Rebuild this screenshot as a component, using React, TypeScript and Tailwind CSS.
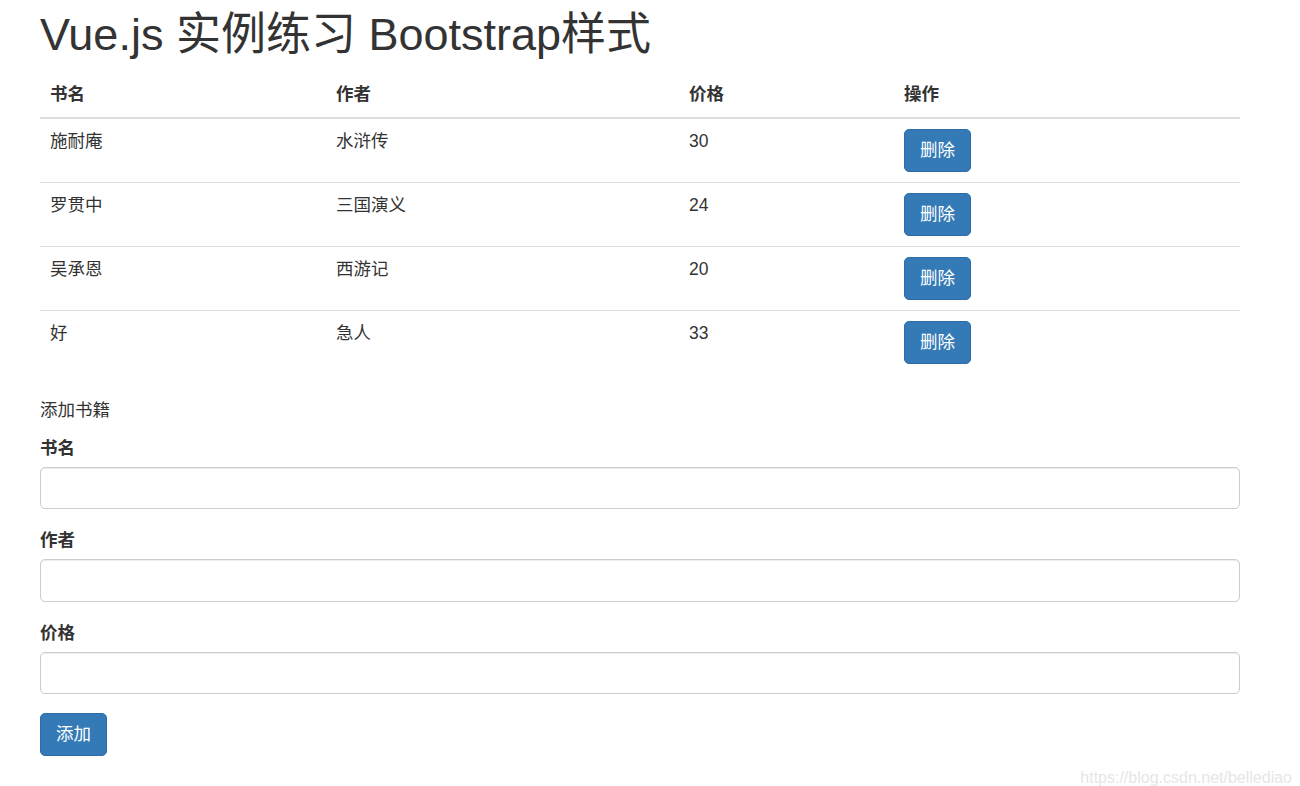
import React from "react";

const books = [
  { name: "施耐庵", author: "水浒传", price: 30 },
  { name: "罗贯中", author: "三国演义", price: 24 },
  { name: "吴承恩", author: "西游记", price: 20 },
  { name: "好", author: "急人", price: 33 },
];

const font = {
  fontFamily:
    '"Liberation Sans", Arial, "Noto Sans CJK SC", sans-serif',
};

export default function App() {
  return (
    <div
      className="relative min-h-[786px] bg-white text-[#333] text-[17.5px] leading-[25px]"
      style={font}
    >
      <div className="ml-[40px] w-[1200px]">
        <h1 className="mt-[10px] mb-[12.5px] text-[45px] leading-[49.5px] font-normal">
          Vue.js 实例练习 Bootstrap样式
        </h1>
        <table className="w-full border-collapse mb-[25px]">
          <thead>
            <tr className="border-b-[2.5px] border-[#ddd]">
              <th className="w-[286px] p-[10px] text-left font-bold">书名</th>
              <th className="w-[353px] p-[10px] text-left font-bold">作者</th>
              <th className="w-[215px] p-[10px] text-left font-bold">价格</th>
              <th className="p-[10px] text-left font-bold">操作</th>
            </tr>
          </thead>
          <tbody>
            {books.map((b, i) => (
              <tr key={i} className={i > 0 ? "border-t border-[#ddd]" : ""}>
                <td className="p-[10px] align-top">{b.name}</td>
                <td className="p-[10px] align-top">{b.author}</td>
                <td className="p-[10px] align-top">{b.price}</td>
                <td className="p-[10px] align-top">
                  <button className="h-[43px] px-[15px] rounded-[5px] bg-[#337ab7] border border-[#2e6da4] text-white">
                    删除
                  </button>
                </td>
              </tr>
            ))}
          </tbody>
        </table>
        <p className="mt-[-1px] mb-[12.5px]">添加书籍</p>
        {["书名", "作者", "价格"].map((l) => (
          <div key={l} className="mb-[18.75px]">
            <label className="block mb-[6.25px] font-bold">{l}</label>
            <input
              className="block w-full h-[42.5px] rounded-[5px] border border-[#ccc] shadow-[inset_0_1px_1px_rgba(0,0,0,0.075)] px-[15px] outline-none"
              type="text"
            />
          </div>
        ))}
        <button className="h-[42.5px] px-[15px] rounded-[5px] bg-[#337ab7] border border-[#2e6da4] text-white">
          添加
        </button>
      </div>
      <div className="absolute right-[8px] top-[756px] text-[16px] leading-[24px] text-[#e6e6e6]">
        https://blog.csdn.net/belledia<span>o</span>
      </div>
    </div>
  );
}
